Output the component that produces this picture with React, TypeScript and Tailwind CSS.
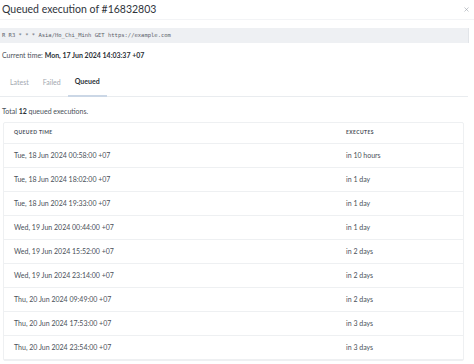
import { X } from "lucide-react"

const rows = [
    { time: "Tue, 18 Jun 2024 00:58:00 +07", executes: "in 10 hours" },
    { time: "Tue, 18 Jun 2024 18:02:00 +07", executes: "in 1 day" },
    { time: "Tue, 18 Jun 2024 19:33:00 +07", executes: "in 1 day" },
    { time: "Wed, 19 Jun 2024 00:44:00 +07", executes: "in 1 day" },
    { time: "Wed, 19 Jun 2024 15:52:00 +07", executes: "in 2 days" },
    { time: "Wed, 19 Jun 2024 23:14:00 +07", executes: "in 2 days" },
    { time: "Thu, 20 Jun 2024 09:49:00 +07", executes: "in 2 days" },
    { time: "Thu, 20 Jun 2024 17:53:00 +07", executes: "in 3 days" },
    { time: "Thu, 20 Jun 2024 23:54:00 +07", executes: "in 3 days" },
]

export default function App() {
    return (
        <div className="w-[474px] h-[364px] overflow-hidden bg-white text-[#3a3f47] font-['Lato',sans-serif]">
            <div className="h-[20px] flex items-center justify-between pl-[2px] pr-[4px] border-b border-[#f3f4f6]">
                <h1 className="text-[10.5px] leading-none text-[#2f343b]">Queued execution of #16832803</h1>
                <X className="h-[7px] w-[7px] text-[#9aa0a8]" strokeWidth={2} />
            </div>

            <div className="mt-[8px] mr-[5px] h-[15px] flex items-center pl-[2px] bg-[#eef0f3] border-r border-[#e2e5e9]">
                <code className="text-[5.5px] leading-none text-[#5b616a] font-['DejaVu_Sans_Mono',monospace] whitespace-pre">
                    R R3 * * * Asia/Ho_Chi_Minh GET https://example.com
                </code>
            </div>

            <p className="mt-[7px] pl-[2px] text-[7px] leading-[10px] text-[#4a5059]">
                Current time: <span className="font-bold text-[#2b3036]">Mon, 17 Jun 2024 14:03:37 +07</span>
            </p>

            <div className="mt-[8px] mr-[6px] h-[29px] flex items-stretch border-b border-[#e9ecef] pl-[3px]">
                <button className="px-[7px] text-[7px] text-[#a3a8b0]">Latest</button>
                <button className="px-[7px] text-[7px] text-[#a3a8b0]">Failed</button>
                <button className="px-[7px] text-[7px] font-bold text-[#2b3036] border-b-2 border-[#cbd7e6] -mb-px">Queued</button>
            </div>

            <p className="mt-[9px] pl-[2px] text-[7px] leading-[10px] text-[#4a5059]">
                Total <span className="font-bold text-[#2b3036]">12</span> queued executions.
            </p>

            <div className="mt-[6px] ml-[3px] w-[461px] border border-[#eef0f2] rounded-[2px]">
                <div className="h-[21px] flex items-center border-b border-[#eef0f2] pl-[10px]">
                    <div className="w-[332px] text-[5px] font-bold uppercase tracking-[0.4px] text-[#4a5059]">Queued time</div>
                    <div className="text-[5px] font-bold uppercase tracking-[0.4px] text-[#4a5059]">Executes</div>
                </div>
                {rows.map((r) => (
                    <div key={r.time} className="h-[24px] flex items-center border-b border-[#eef0f2] pl-[10px]">
                        <div className="w-[332px] text-[7px] text-[#4a5059]">{r.time}</div>
                        <div className="text-[7px] text-[#4a5059]">{r.executes}</div>
                    </div>
                ))}
            </div>
        </div>
    )
}
